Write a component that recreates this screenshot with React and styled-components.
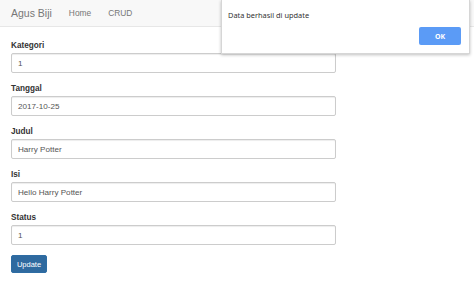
import React from 'react'
import styled, { createGlobalStyle } from 'styled-components'

const Global = createGlobalStyle`
  html, body {
    margin: 0;
    padding: 0;
    background: #fff;
    font-family: "Liberation Sans", Arial, sans-serif;
    color: #333;
  }
`

const Page = styled.div`
  position: relative;
  width: 474px;
  height: 289px;
  overflow: hidden;
`

const Navbar = styled.nav`
  display: flex;
  align-items: center;
  height: 27px;
  background: #f8f8f8;
  border-bottom: 1px solid #e7e7e7;
  padding-left: 11px;
  box-sizing: border-box;
`

const Brand = styled.a`
  font-size: 10.5px;
  color: #777;
  margin-right: 17px;
  margin-top: -1px;
`

const NavLink = styled.a`
  font-size: 8.4px;
  color: #777;
  margin-right: 17px;
  margin-top: -1px;
`

const Form = styled.form`
  padding: 13px 0 0 11px;
  width: 325px;
`

const Group = styled.div`
  display: flex;
  flex-direction: column;
  margin-bottom: 10px;
`

const Label = styled.label`
  font-size: 8.2px;
  font-weight: bold;
  line-height: 11px;
  margin-bottom: 2px;
  color: #333;
`

const Input = styled.div`
  height: 20px;
  box-sizing: border-box;
  border: 1px solid #ccc;
  border-radius: 2px;
  box-shadow: inset 0 1px 1px rgba(0, 0, 0, 0.075);
  padding-left: 6px;
  display: flex;
  align-items: center;
  font-size: 8.1px;
  color: #555;
`

const Button = styled.button`
  display: block;
  height: 18px;
  width: 36px;
  padding: 0;
  border: 1px solid #2e6da4;
  border-radius: 2px;
  background: #2f6a9f;
  color: #fff;
  font-family: "Liberation Sans", Arial, sans-serif;
  font-size: 7.5px;
`

const Dialog = styled.div`
  position: absolute;
  top: 0;
  left: 221px;
  width: 249px;
  height: 54px;
  box-sizing: border-box;
  background: #fff;
  border: 1px solid #d6d6d6;
  border-top: none;
  box-shadow: 0 1px 3px rgba(0, 0, 0, 0.25);
  font-family: "Noto Sans", "Open Sans", sans-serif;
  display: flex;
  flex-direction: column;
  padding: 10px 8px 8px 6px;
`

const Message = styled.div`
  font-size: 7.4px;
  color: #333;
  line-height: 11px;
`

const Actions = styled.div`
  display: flex;
  justify-content: flex-end;
  margin-top: auto;
`

const OkButton = styled.button`
  width: 42px;
  height: 18px;
  border: none;
  border-radius: 2px;
  background: #5b9bf6;
  color: #fff;
  font-family: "Noto Sans", "Open Sans", sans-serif;
  font-weight: bold;
  font-size: 7px;
  padding: 0;
`

const fields = [
  ['Kategori', '1'],
  ['Tanggal', '2017-10-25'],
  ['Judul', 'Harry Potter'],
  ['Isi', 'Hello Harry Potter'],
  ['Status', '1'],
]

export default function App () {
  return (
    <Page>
      <Global />
      <Navbar>
        <Brand>Agus Biji</Brand>
        <NavLink>Home</NavLink>
        <NavLink>CRUD</NavLink>
      </Navbar>
      <Form>
        {fields.map(([label, value]) => (
          <Group key={label}>
            <Label>{label}</Label>
            <Input>{value}</Input>
          </Group>
        ))}
        <Button type='button'>Update</Button>
      </Form>
      <Dialog>
        <Message>Data berhasil di update</Message>
        <Actions>
          <OkButton>OK</OkButton>
        </Actions>
      </Dialog>
    </Page>
  )
}
